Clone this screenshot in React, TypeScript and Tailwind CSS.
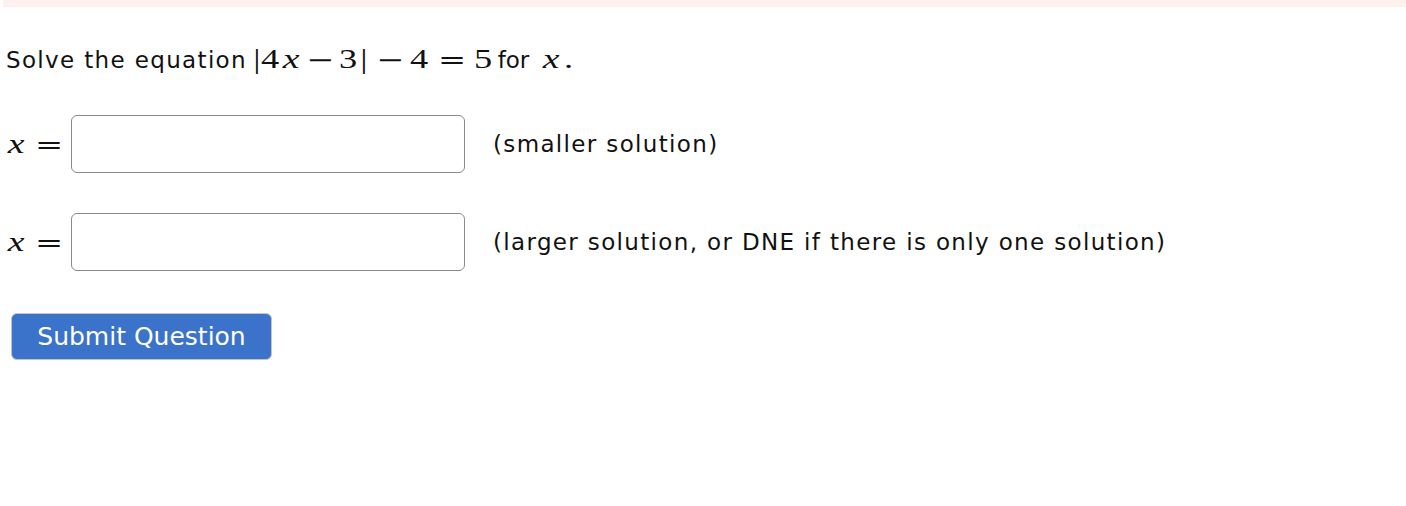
import React from 'react';

const serif = { fontFamily: '"Liberation Serif", "DejaVu Serif", serif' };
const opFont = { fontFamily: '"DejaVu Serif", "Liberation Serif", serif' };

// one math glyph centred in a fixed-width slot, so spacing follows the typeset original
const Tok: React.FC<{ w: number; italic?: boolean; op?: boolean; children: React.ReactNode }> = ({ w, italic, op, children }) => (
  <span className="flex justify-center whitespace-nowrap" style={{ width: w }}>
    <span
      className={`inline-block ${italic ? 'italic scale-x-[1.35]' : ''} ${op ? 'text-[24px] scale-x-[1.4]' : 'text-[28px]'} ${!italic && !op ? 'scale-x-[1.3]' : ''}`}
      style={op ? opFont : serif}
    >
      {children}
    </span>
  </span>
);

const AnswerRow: React.FC<{ label: string }> = ({ label }) => (
  <div className="flex items-center h-[58px]">
    <div className="w-[71px] flex items-baseline">
      <Tok w={32} italic>x</Tok>
      <span className="ml-[5px]"><Tok w={24} op>=</Tok></span>
    </div>
    <input
      type="text"
      className="w-[394px] h-[58px] border border-[#8a8a8a] rounded-[6px] bg-white outline-none"
    />
    <span className="ml-[28px] text-[23px] tracking-[1.35px] text-[#111]">{label}</span>
  </div>
);

export default function App() {
  return (
    <div
      className="w-[1406px] h-[506px] bg-white text-[#111]"
      style={{ fontFamily: '"DejaVu Sans", Verdana, sans-serif' }}
    >
      <div className="ml-[3px] h-[7px] bg-[#fdf0ef]" />

      <div className="mt-[34px] pl-[6px] flex items-baseline leading-[36px]">
        <span className="w-[248px] text-[23px] tracking-[1.35px] whitespace-nowrap">Solve the equation</span>
        <Tok w={6}>|</Tok>
        <Tok w={20}>4</Tok>
        <Tok w={22} italic>x</Tok>
        <Tok w={36} op>−</Tok>
        <Tok w={20}>3</Tok>
        <Tok w={12}>|</Tok>
        <Tok w={40} op>−</Tok>
        <Tok w={18}>4</Tok>
        <Tok w={48} op>=</Tok>
        <Tok w={14}>5</Tok>
        <span className="w-[47px] flex justify-center text-[23px]">for</span>
        <Tok w={28} italic>x</Tok>
        <Tok w={6}>.</Tok>
      </div>

      <div className="mt-[37px] flex flex-col gap-[40px]">
        <AnswerRow label="(smaller solution)" />
        <AnswerRow label="(larger solution, or DNE if there is only one solution)" />
      </div>

      <div className="mt-[42px] pl-[11px]">
        <button className="w-[261px] h-[47px] bg-[#3a73c9] border border-[#c4c4c4] rounded-[6px] text-white text-[25px] leading-none">
          Submit Question
        </button>
      </div>
    </div>
  );
}
